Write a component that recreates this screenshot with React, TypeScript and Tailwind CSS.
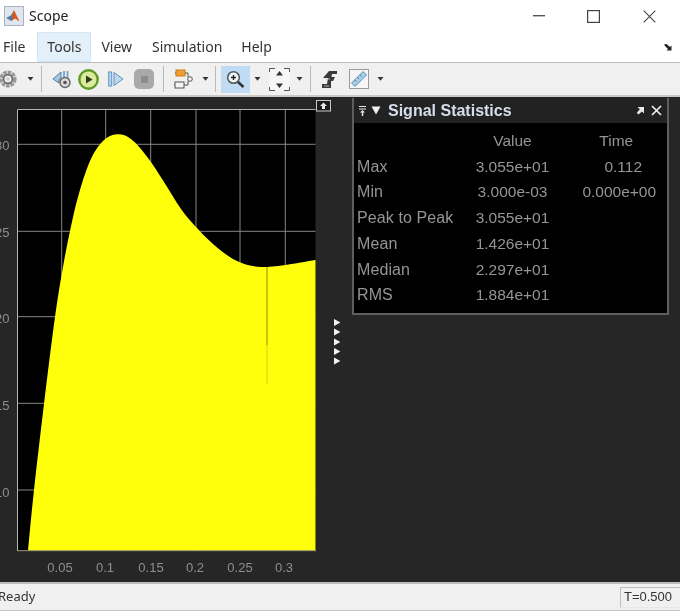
import React from "react";

const curve: [number, number][] = [
  [28, 550.7], [34, 490], [44, 404], [55, 317], [63, 267], [70, 231], [78, 197], [90, 161], [103, 141], [117, 134.3],
  [131, 139], [148, 158], [164, 182], [181, 209], [197, 228], [213, 244], [233, 259], [250, 265.5], [267, 267], [290, 264.3], [315.5, 260],
];

function smooth(p: [number, number][]) {
  let d = `M${p[0][0]} ${p[0][1]}`;
  for (let i = 0; i < p.length - 1; i++) {
    const a = p[Math.max(0, i - 1)], b = p[i], c = p[i + 1], e = p[Math.min(p.length - 1, i + 2)];
    d += `C${(b[0] + (c[0] - a[0]) / 6).toFixed(1)} ${(b[1] + (c[1] - a[1]) / 6).toFixed(1)} ${(c[0] - (e[0] - b[0]) / 6).toFixed(1)} ${(c[1] - (e[1] - b[1]) / 6).toFixed(1)} ${c[0]} ${c[1]}`;
  }
  return d;
}
const area = smooth(curve) + "L315.5 550.7Z";

const Arrow = ({ className }: { className: string }) => (
  <svg width="7" height="4" viewBox="0 0 7 4" className={className}><path d="M0.5 0H6.5L3.5 3.8Z" fill="#333" /></svg>
);
const Sep = ({ className }: { className: string }) => <div className={`w-[1px] h-[26px] bg-[#b9b9b9] shrink-0 ${className}`} />;

function Chart() {
  const vs = [61.7, 105.7, 150.7, 196, 240, 285.3];
  const hs = [144.3, 231.3, 316.7, 403.3, 490];
  const ylab: [string, number][] = [["30", 150], ["25", 237], ["20", 323], ["15", 410], ["10", 497]];
  const xlab: [string, number][] = [["0.05", 60], ["0.1", 105], ["0.15", 151], ["0.2", 195], ["0.25", 240], ["0.3", 284]];
  return (
    <svg width="340" height="485" viewBox="0 97 340 485" className="block shrink-0">
      <rect x="17.5" y="109.5" width="298" height="441" fill="#000" />
      {vs.map((x) => <line key={x} x1={x} x2={x} y1="109" y2="551" stroke="#858585" strokeWidth="1" />)}
      {hs.map((y) => <line key={y} x1="17.5" x2="315.5" y1={y} y2={y} stroke="#858585" strokeWidth="1" />)}
      <path d={area} fill="#ffff0c" />
      <line x1="267" x2="267" y1="267" y2="345" stroke="#8d8d10" strokeWidth="1" />
      <line x1="267" x2="267" y1="345" y2="384" stroke="#d2d20c" strokeWidth="1" />
      <path d="M17.5 551V109.5H315.5" fill="none" stroke="#b5b5b5" strokeWidth="1" />
      <path d="M17.5 550.7H316" fill="none" stroke="#9a9a70" strokeWidth="1" />
      {ylab.map(([t, y]) => (
        <text key={t} x="9.5" y={y} textAnchor="end" fill="#8e8e8e" fontSize="13" fontFamily="'Liberation Sans', sans-serif">{t}</text>
      ))}
      {xlab.map(([t, x]) => (
        <text key={t} x={x} y="572" textAnchor="middle" fill="#8e8e8e" fontSize="13" fontFamily="'Liberation Sans', sans-serif">{t}</text>
      ))}
      <rect x="316.5" y="100.5" width="14" height="10.5" fill="#1c1c1c" stroke="#c8c8c8" />
      <path d="M323.5 102.5l3.5 3.5h-2v3h-3v-3h-2z" fill="#e8e8e8" />
      {[322.5, 332, 342, 351.5, 361].map((y) => (
        <path key={y} d={`M334 ${y - 3.5}L340.5 ${y}L334 ${y + 3.5}Z`} fill="#f2f2f2" />
      ))}
    </svg>
  );
}

const rows: [string, string, string, string][] = [
  ["Max", "3.055e+01", "0.112", "pl-[30px]"],
  ["Min", "3.000e-03", "0.000e+00", "pl-[22px]"],
  ["Peak to Peak", "3.055e+01", "", ""],
  ["Mean", "1.426e+01", "", ""],
  ["Median", "2.297e+01", "", ""],
  ["RMS", "1.884e+01", "", ""],
];

function Panel() {
  return (
    <div className="w-[317px] h-[217px] mt-[1px] ml-[12px] border-2 border-t-0 border-[#5e5e5e] bg-black shrink-0">
      <div className="h-[25px] bg-[#222222] flex items-center pl-[4px] pr-[5px]">
        <svg width="10" height="12" viewBox="0 0 10 12" className="shrink-0">
          <path d="M1 1.5H8M1 4H8" stroke="#e8e8e8" strokeWidth="1.2" />
          <path d="M4.5 5L7 7.5H5.2V11H3.8V7.5H2Z" fill="#e8e8e8" />
        </svg>
        <svg width="10" height="9" viewBox="0 0 10 9" className="ml-[3px] shrink-0"><path d="M0.5 0.5H9.5L5 8.5Z" fill="#eef1f5" /></svg>
        <span className="ml-[7px] text-[16px] font-bold text-[#d5deea] leading-none font-['Liberation_Sans',sans-serif]">Signal Statistics</span>
        <svg width="9" height="9" viewBox="0 0 9 9" className="ml-auto mr-[6px] shrink-0"><path d="M1.5 1H8V7.5L6 5.5L2.5 8.5L0.8 6.8L3.8 3.3Z" fill="#e8e8e8" /></svg>
        <svg width="11" height="11" viewBox="0 0 11 11" className="shrink-0"><path d="M1 1L10 10M10 1L1 10" stroke="#f2f2f2" strokeWidth="1.6" /></svg>
      </div>
      <div className="grid grid-cols-[115.5px_80px_111.5px] pl-[3px] pt-[5px] text-[15.5px] leading-[25.7px] text-[#959595] font-['Liberation_Sans',sans-serif]">
        <div />
        <div className="text-center whitespace-nowrap">Value</div>
        <div className="text-center pl-[16px]">Time</div>
        {rows.map(([a, b, c, pad]) => (
          <React.Fragment key={a}>
            <div className="whitespace-nowrap text-[16px] tracking-[0.1px]">{a}</div>
            <div className="text-center whitespace-nowrap">{b}</div>
            <div className={`text-center whitespace-nowrap ${pad}`}>{c}</div>
          </React.Fragment>
        ))}
      </div>
    </div>
  );
}

export default function App() {
  return (
    <div className="w-[680px] h-[611px] overflow-hidden bg-white flex flex-col font-['Noto_Sans',sans-serif] blur-[0.6px]">
      {/* Title bar */}
      <div className="h-[32px] flex items-center shrink-0">
        <svg width="20" height="20" viewBox="0 0 20 20" className="ml-[4px] shrink-0">
          <rect x="0.5" y="0.5" width="19" height="19" fill="#dfe6ef" stroke="#a9b3bf" />
          <path d="M2.5 12L7 9.5L10 4L15.5 15.5L11 12.5L7.5 15Z" fill="#d9581c" />
          <path d="M2.5 12L7 9.5L9 7L8 12L7.5 15Z" fill="#3f7fb8" />
        </svg>
        <span className="ml-[5px] text-[14px] text-[#222] leading-none">Scope</span>
        <svg width="12" height="2" viewBox="0 0 12 2" className="ml-[465px] shrink-0"><rect width="12" height="1.4" fill="#555" /></svg>
        <svg width="13" height="13" viewBox="0 0 13 13" className="ml-[42px] shrink-0"><rect x="0.6" y="0.6" width="11.8" height="11.8" fill="none" stroke="#444" strokeWidth="1.2" /></svg>
        <svg width="13" height="13" viewBox="0 0 13 13" className="ml-[43px] shrink-0"><path d="M0.7 0.7L12.3 12.3M12.3 0.7L0.7 12.3" stroke="#444" strokeWidth="1.1" /></svg>
      </div>
      {/* Menu bar */}
      <div className="h-[31px] flex items-stretch text-[14px] text-[#333] border-b border-[#bdbdbd] shrink-0 leading-[30px]">
        <span className="ml-[3px]">File</span>
        <span className="ml-[12px] w-[54px] h-[30px] text-center bg-[#e3eff9] border border-[#d3e6f6] leading-[28px]">Tools</span>
        <span className="ml-[10px]">View</span>
        <span className="ml-[20px]">Simulation</span>
        <span className="ml-[19px]">Help</span>
        <svg width="8" height="7" viewBox="0 0 8 7" className="ml-auto mr-[8px] self-center shrink-0"><path d="M0 0.5L2.5 0L6 3L7.5 1.5V6.5H2.5L4 5L1 2Z" fill="#222" /></svg>
      </div>
      {/* Toolbar */}
      <div className="h-[34px] bg-[#f0f0f0] flex items-center border-b-2 border-[#c9c9c9] shrink-0">
        <svg width="18" height="18" viewBox="0 0 18 18" className="-ml-[1px] shrink-0">
          <circle cx="9" cy="9" r="6.8" fill="none" stroke="#9a9a9a" strokeWidth="3.6" strokeDasharray="3.6 0.9" />
          <circle cx="9" cy="9" r="4.4" fill="#ececec" stroke="#6a6a6a" strokeWidth="1.6" />
          <circle cx="9" cy="9" r="1.8" fill="#cfcfcf" />
        </svg>
        <Arrow className="ml-[10px] shrink-0" />
        <Sep className="ml-[7px]" />
        <svg width="19" height="20" viewBox="0 0 19 20" className="ml-[10px] shrink-0">
          <path d="M9 3L1 10L7 14V10.5L9 9Z" fill="#a9c8e4" stroke="#4d7ea8" />
          <rect x="11" y="2" width="2" height="8" fill="#7fa8cc" /><rect x="14.5" y="2" width="2" height="8" fill="#7fa8cc" />
          <circle cx="13" cy="13.5" r="5" fill="#d8d8d8" stroke="#666" strokeWidth="1.4" />
          <circle cx="13" cy="13.5" r="1.8" fill="#555" />
        </svg>
        <svg width="21" height="21" viewBox="0 0 21 21" className="ml-[7px] shrink-0">
          <circle cx="10.5" cy="10.5" r="9.2" fill="#dcea9e" stroke="#5f9a24" strokeWidth="2.4" />
          <path d="M8 6.5L14.5 10.5L8 14.5Z" fill="#2c3a1c" />
        </svg>
        <svg width="16" height="16" viewBox="0 0 16 16" className="ml-[9px] shrink-0">
          <rect x="0.7" y="1" width="3" height="14" fill="#bcd8ef" stroke="#5a93c4" />
          <path d="M6 1.5L15 8L6 14.5Z" fill="#bcd8ef" stroke="#5a93c4" />
        </svg>
        <div className="ml-[10px] w-[20px] h-[20px] rounded-[5px] bg-[#a9a9a9] flex items-center justify-center shrink-0">
          <div className="w-[7px] h-[7px] bg-[#8c8c8c]" />
        </div>
        <Sep className="ml-[9px]" />
        <svg width="19" height="20" viewBox="0 0 19 20" className="ml-[10px] shrink-0">
          <rect x="2" y="1" width="9" height="6" fill="#f0a030" stroke="#c87a18" />
          <rect x="1" y="13" width="9" height="6" fill="#f6f6f6" stroke="#555" />
          <circle cx="16" cy="10" r="2.3" fill="#f6f6f6" stroke="#555" />
          <path d="M11 4H14V8M10 16H14V12" fill="none" stroke="#555" />
          <path d="M1 4H2M0 16H1" stroke="#555" />
        </svg>
        <Arrow className="ml-[9px] shrink-0" />
        <Sep className="ml-[6px]" />
        <div className="ml-[5px] w-[29px] h-[27px] bg-[#bfdcf4] flex items-center justify-center shrink-0">
          <svg width="19" height="19" viewBox="0 0 19 19">
            <circle cx="7.5" cy="7.5" r="5.8" fill="#eef5fb" stroke="#555" strokeWidth="1.5" />
            <path d="M5 7.5H10M7.5 5V10" stroke="#222" strokeWidth="1.4" />
            <path d="M12 12L17.5 17" stroke="#333" strokeWidth="2.6" />
          </svg>
        </div>
        <Arrow className="ml-[4px] shrink-0" />
        <svg width="21" height="23" viewBox="0 0 21 23" className="ml-[8px] shrink-0">
          <rect x="0.5" y="0.5" width="20" height="22" fill="#f7f7f7" />
          <path d="M0.5 4V0.5H6M15 0.5H20.5V4M0.5 19V22.5H6M15 22.5H20.5V19" fill="none" stroke="#555" />
          <path d="M10.5 3L14 7.5H7ZM10.5 20L14 15.5H7Z" fill="#333" />
        </svg>
        <Arrow className="ml-[6px] shrink-0" />
        <Sep className="ml-[7px]" />
        <svg width="17" height="20" viewBox="0 0 17 20" className="ml-[10px] shrink-0">
          <path d="M1 19V15H6L7 9H2L8 2H16V5H11L10.5 8H14L12 12H10V19Z" fill="#3a3a3a" />
          <path d="M3 17H8M4 10H9" stroke="#d0d0d0" strokeWidth="0.8" />
        </svg>
        <svg width="20" height="20" viewBox="0 0 20 20" className="ml-[11px] shrink-0">
          <rect x="0.5" y="0.5" width="19" height="19" fill="#f6f6f6" stroke="#9a9a9a" />
          <path d="M2.5 14L14 2.5L17.5 6L6 17.5Z" fill="#a8cde8" stroke="#5e8fb5" />
          <path d="M6 11L7.5 12.5M8.5 8.5L10 10M11 6L12.5 7.5" stroke="#4a7a9f" />
        </svg>
        <Arrow className="ml-[8px] shrink-0" />
      </div>
      {/* Main */}
      <div className="h-[485px] bg-[#262626] flex items-start shrink-0">
        <Chart />
        <Panel />
      </div>
      {/* Status bar */}
      <div className="flex-1 bg-[#f0f0f0] border-t-2 border-[#bcbcbc] flex items-center text-[13px] text-[#333] border-b border-b-[#c4c4c4]">
        <span className="-ml-[2px]">Ready</span>
        <span className="ml-auto w-[60px] h-[21px] border border-r-0 border-[#bfbfbf] border-b-[#e8e8e8] flex items-center pl-[3px] font-['Liberation_Sans',sans-serif]">T=0.500</span>
      </div>
    </div>
  );
}
